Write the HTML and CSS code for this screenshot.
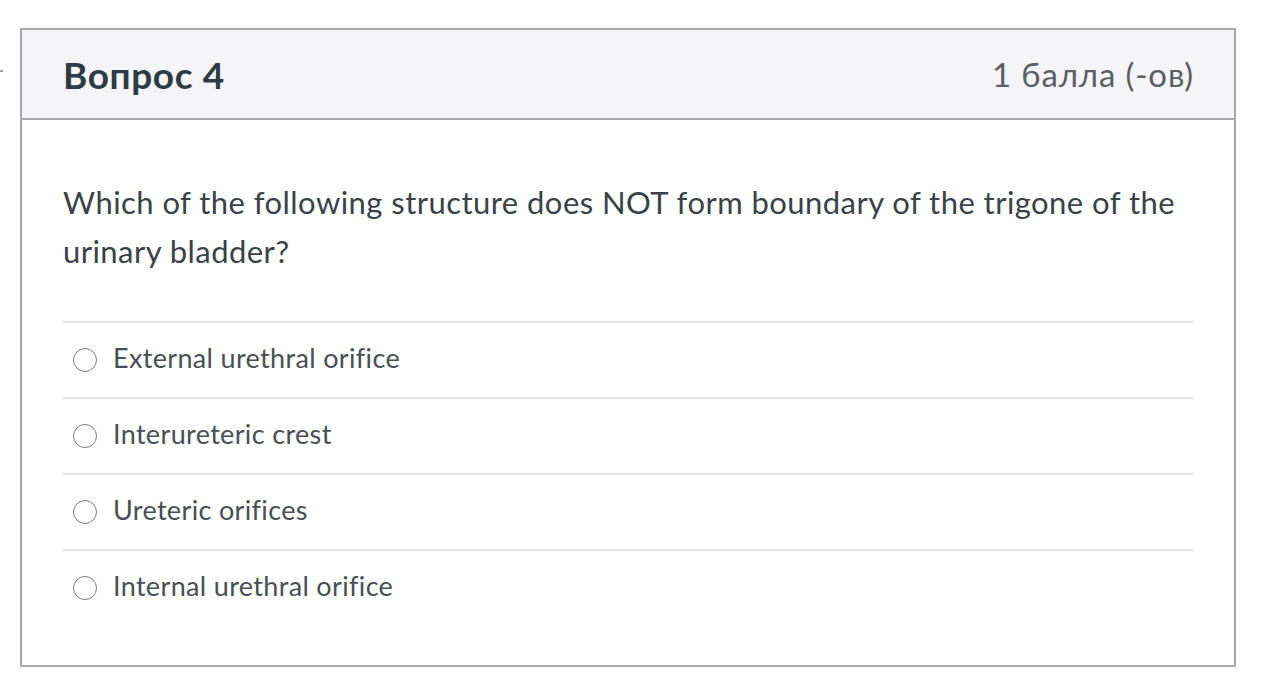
FILE: index.html
```html
<!DOCTYPE html>
<html lang="ru">
<head>
<meta charset="utf-8">
<title>Вопрос 4</title>
<link rel="stylesheet" href="styles.css">
</head>
<body>
<span class="edge-mark"></span>
<div class="question">
  <div class="question-header">
    <span class="question-name">Вопрос 4</span>
    <span class="question-points">1 балла (-ов)</span>
  </div>
  <div class="question-body">
    <p class="question-text">Which of the following structure does NOT form boundary of the trigone of the urinary bladder?</p>
    <div class="answers">
      <label class="answer"><span class="radio"></span><span class="answer-label">External urethral orifice</span></label>
      <label class="answer"><span class="radio"></span><span class="answer-label">Interureteric crest</span></label>
      <label class="answer"><span class="radio"></span><span class="answer-label">Ureteric orifices</span></label>
      <label class="answer"><span class="radio"></span><span class="answer-label">Internal urethral orifice</span></label>
    </div>
  </div>
</div>
</body>
</html>
```

FILE: styles.css
```css
html, body {
  margin: 0;
  padding: 0;
  background: #ffffff;
}
body {
  font-family: Lato, "Liberation Sans", sans-serif;
  color: #2d3b45;
  padding: 28px 0 0 20px;
  position: relative;
}
.edge-mark {
  position: absolute;
  left: 0;
  top: 70px;
  width: 3px;
  height: 2px;
  background: #9aa0a6;
}
.question {
  width: 1212px;
  border: 2px solid #a8a8a8;
  box-sizing: content-box;
}
.question-header {
  height: 88px;
  background: #f5f5f7;
  border-bottom: 2px solid #a8a8a8;
  display: flex;
  align-items: center;
  justify-content: space-between;
  padding: 0 41px 0 41px;
}
.question-name {
  font-size: 37px;
  font-weight: 700;
  letter-spacing: 0.6px;
  color: #2d3b45;
}
.question-points {
  font-size: 33px;
  letter-spacing: 0.85px;
  color: #5b5f63;
  margin-right: -1px;
}
.question-body {
  padding: 58px 41px 40px 41px;
}
.question-text {
  margin: 0 0 45px 0;
  font-size: 31px;
  letter-spacing: 0.45px;
  line-height: 49px;
  color: #3a4248;
}
.answers {
  display: flex;
  flex-direction: column;
}
.answer {
  display: flex;
  align-items: center;
  height: 74px;
  border-top: 2px solid #e4e4e4;
  padding-left: 10px;
}
.radio {
  width: 22px;
  height: 22px;
  border: 1.5px solid #7a7a7a;
  border-radius: 50%;
  flex: none;
}
.answer-label {
  margin-left: 16px;
  margin-bottom: 5px;
  font-size: 27px;
  letter-spacing: 0.34px;
  color: #4a4f54;
}
```
